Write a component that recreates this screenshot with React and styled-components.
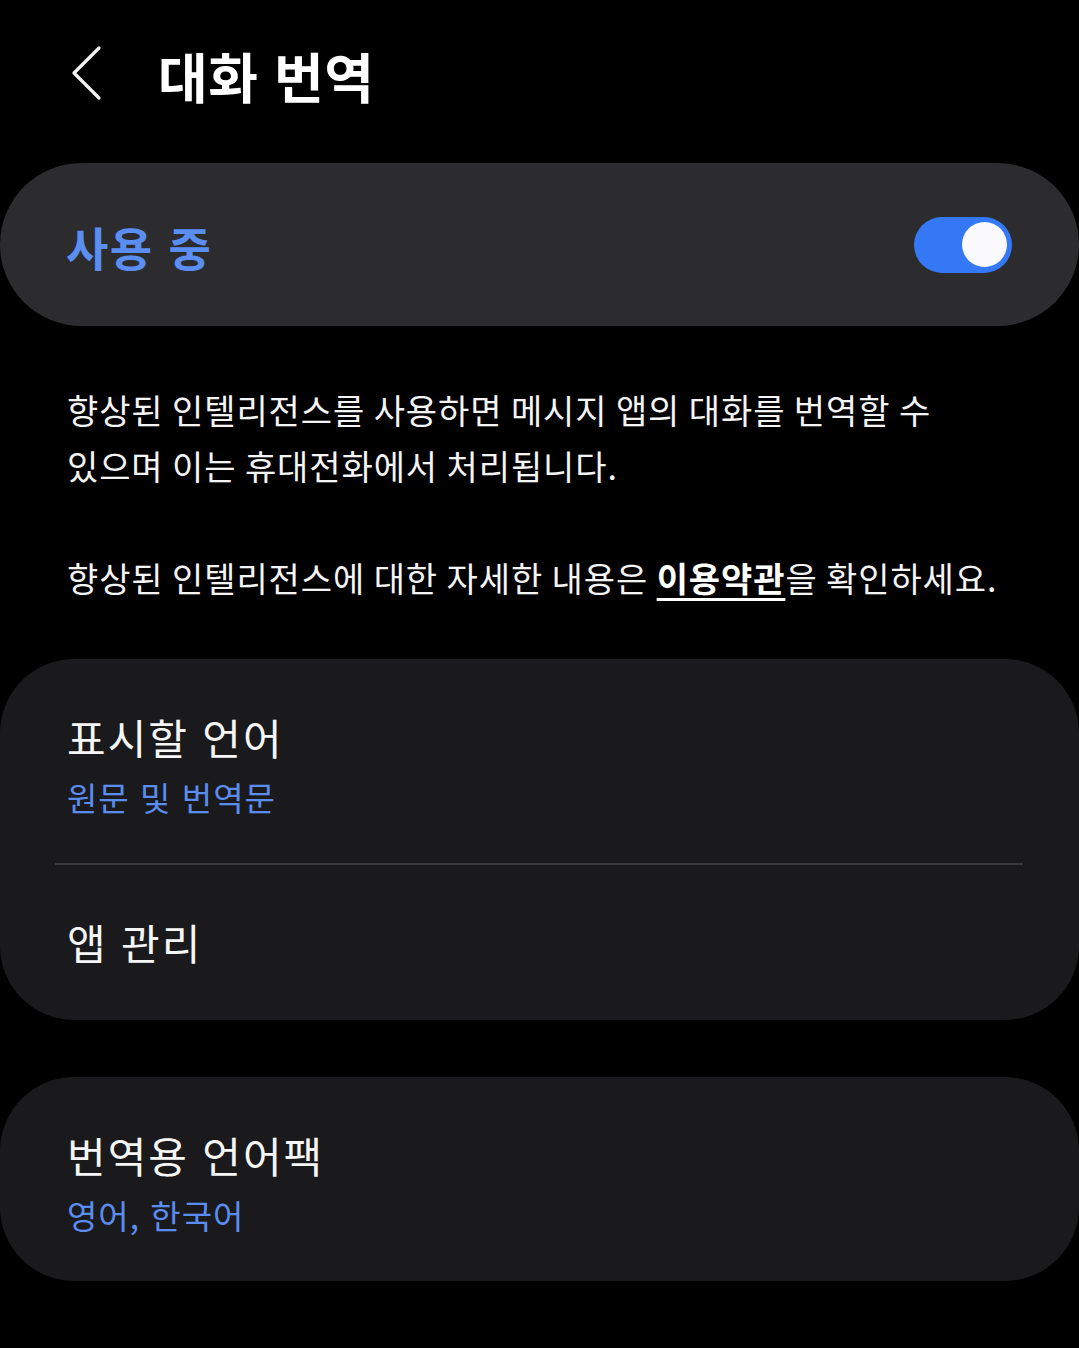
import React from "react";
import styled, { createGlobalStyle } from "styled-components";

const Global = createGlobalStyle`
  html, body { margin: 0; padding: 0; background: #000; }
  body {
    font-family: "Noto Sans CJK KR", "Noto Sans", sans-serif;
    color: #f4f4f4;
  }
`;

const Page = styled.div`
  width: 1079px;
  min-height: 1348px;
  background: #000;
  display: flex;
  flex-direction: column;
`;

const Header = styled.header`
  height: 152px;
  display: flex;
  align-items: center;
  padding-left: 70px;
  box-sizing: border-box;
`;

const BackButton = styled.button`
  width: 34px;
  height: 56px;
  padding: 0;
  border: 0;
  background: transparent;
  display: flex;
  align-items: center;
  justify-content: center;
  margin-top: -6px;
`;

const Title = styled.h1`
  margin: 0 0 0 54px;
  font-size: 54px;
  font-weight: 700;
  letter-spacing: 0.5px;
  word-spacing: 3px;
  line-height: 1;
  color: #fff;
`;

const SwitchCard = styled.div`
  margin-top: 11px;
  height: 163px;
  border-radius: 82px;
  background: #2c2c2e;
  display: flex;
  align-items: center;
  justify-content: space-between;
  padding: 0 67px 0 66px;
`;

const SwitchLabel = styled.span`
  font-size: 46px;
  font-weight: 700;
  letter-spacing: 1.5px;
  word-spacing: 3px;
  color: #5b8ef2;
  margin-top: 2px;
`;

const Toggle = styled.div`
  width: 98px;
  height: 56px;
  border-radius: 28px;
  background: ${(p) => (p.$on ? "#3478f6" : "#555")};
  display: flex;
  align-items: center;
  justify-content: ${(p) => (p.$on ? "flex-end" : "flex-start")};
  padding: 0 5px;
  box-sizing: border-box;
`;

const Knob = styled.div`
  width: 45px;
  height: 45px;
  border-radius: 50%;
  background: #fbfbff;
`;

const Description = styled.div`
  padding: 56px 20px 53px 67px;
  font-size: 34px;
  letter-spacing: 0.9px;
  word-spacing: 0;
  line-height: 56px;
  color: #f4f4f4;
`;

const Para = styled.p`
  margin: 0;
  & + & { margin-top: 56px; }
`;

const Link = styled.a`
  font-weight: 700;
  color: #fff;
  text-decoration: underline;
  text-decoration-thickness: 3px;
  text-underline-offset: 6px;
`;

const Card = styled.section`
  background: #1a1a1c;
  border-radius: 74px;
  display: flex;
  flex-direction: column;
  & + & { margin-top: 57px; }
`;

const Row = styled.div`
  display: flex;
  flex-direction: column;
  padding: ${(p) => (p.$sub ? "52px 67px 44px" : "51px 67px 52px")};
`;

const RowTitle = styled.div`
  font-size: 42px;
  letter-spacing: 2px;
  word-spacing: 2px;
  line-height: 52px;
  color: #f6f6f6;
`;

const RowSub = styled.div`
  margin-top: 12px;
  font-size: 33px;
  letter-spacing: 1px;
  word-spacing: 2px;
  line-height: 44px;
  color: #5a8def;
`;

const Divider = styled.div`
  height: 2px;
  background: #38383a;
  margin: 0 56px 0 55px;
`;

function Chevron() {
  return (
    <svg width="34" height="56" viewBox="0 0 34 56" fill="none">
      <path
        d="M29 3 L4 28 L29 53"
        stroke="#f2f2f2"
        strokeWidth="3.2"
        strokeLinecap="round"
        strokeLinejoin="round"
      />
    </svg>
  );
}

export default function App() {
  return (
    <>
      <Global />
      <Page>
        <Header>
          <BackButton aria-label="뒤로">
            <Chevron />
          </BackButton>
          <Title>대화 번역</Title>
        </Header>

        <SwitchCard>
          <SwitchLabel>사용 중</SwitchLabel>
          <Toggle $on>
            <Knob />
          </Toggle>
        </SwitchCard>

        <Description>
          <Para>
            향상된 인텔리전스를 사용하면 메시지 앱의 대화를 번역할 수
            <br />
            있으며 이는 휴대전화에서 처리됩니다.
          </Para>
          <Para>
            향상된 인텔리전스에 대한 자세한 내용은 <Link>이용약관</Link>을 확인하세요.
          </Para>
        </Description>

        <Card>
          <Row $sub>
            <RowTitle>표시할 언어</RowTitle>
            <RowSub>원문 및 번역문</RowSub>
          </Row>
          <Divider />
          <Row>
            <RowTitle>앱 관리</RowTitle>
          </Row>
        </Card>

        <Card>
          <Row $sub>
            <RowTitle>번역용 언어팩</RowTitle>
            <RowSub>영어, 한국어</RowSub>
          </Row>
        </Card>
      </Page>
    </>
  );
}
